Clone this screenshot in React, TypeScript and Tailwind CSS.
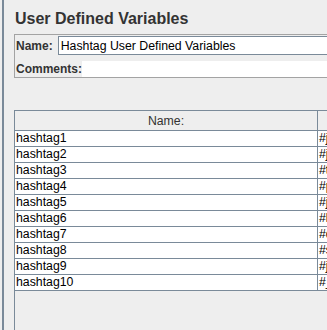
const rows = [
  { name: 'hashtag1', value: '#jmeter' },
  { name: 'hashtag2', value: '#java' },
  { name: 'hashtag3', value: '#testing' },
  { name: 'hashtag4', value: '#performance' },
  { name: 'hashtag5', value: '#jmeter' },
  { name: 'hashtag6', value: '#load' },
  { name: 'hashtag7', value: '#qa' },
  { name: 'hashtag8', value: '#stress' },
  { name: 'hashtag9', value: '#java' },
  { name: 'hashtag10', value: '#_automation' },
];

export default function App() {
  return (
    <div className="w-[327px] h-[330px] bg-[#eeeeee] overflow-hidden flex font-['Liberation_Sans',Arial,sans-serif]">
      <div className="ml-[2px] w-[2px] shrink-0 bg-[#7a8a99]" />
      <div className="ml-[10px] w-[400px] shrink-0 flex flex-col">
        <h1 className="pt-[9px] pl-px text-[16px] leading-[20px] font-bold text-[#333333]">
          User Defined Variables
        </h1>

        <div className="mt-[5px] w-[340px] h-[44px] border border-[#a3a3a3] flex flex-col">
          <div className="pt-px flex items-start">
            <span className="pl-px pt-[3px] text-[12px] leading-[15px] font-bold text-[#333333]">Name:</span>
            <div className="ml-[5px] flex-1 h-[19px] border border-[#7a8a99] bg-white pl-[2px] pt-[2px] text-[12.3px] leading-[15px] text-black whitespace-nowrap">
              Hashtag User Defined Variables
            </div>
          </div>
          <div className="mt-[6px] flex">
            <span className="pl-px text-[12px] leading-[16px] font-bold text-[#333333]">Comments:</span>
            <div className="flex-1 h-[16px] bg-white" />
          </div>
        </div>

        <div className="mt-[32px] flex-1 border-l border-t border-[#7a8a99] flex flex-col text-[12.3px]">
          <div className="flex border-b border-[#7a8a99] h-[20px]">
            <div className="w-[303px] border-r border-[#7a8a99] pt-[2px] leading-[17px] text-center text-[#333333]">
              Name:
            </div>
            <div className="flex-1" />
          </div>
          {rows.map((r) => (
            <div key={r.name} className="flex h-[16px] bg-white border-b border-[#7a8a99] leading-[15px] text-black">
              <div className="w-[303px] border-r border-[#7a8a99] pl-px">{r.name}</div>
              <div className="flex-1 pl-px whitespace-nowrap">{r.value}</div>
            </div>
          ))}
        </div>
      </div>
    </div>
  );
}
